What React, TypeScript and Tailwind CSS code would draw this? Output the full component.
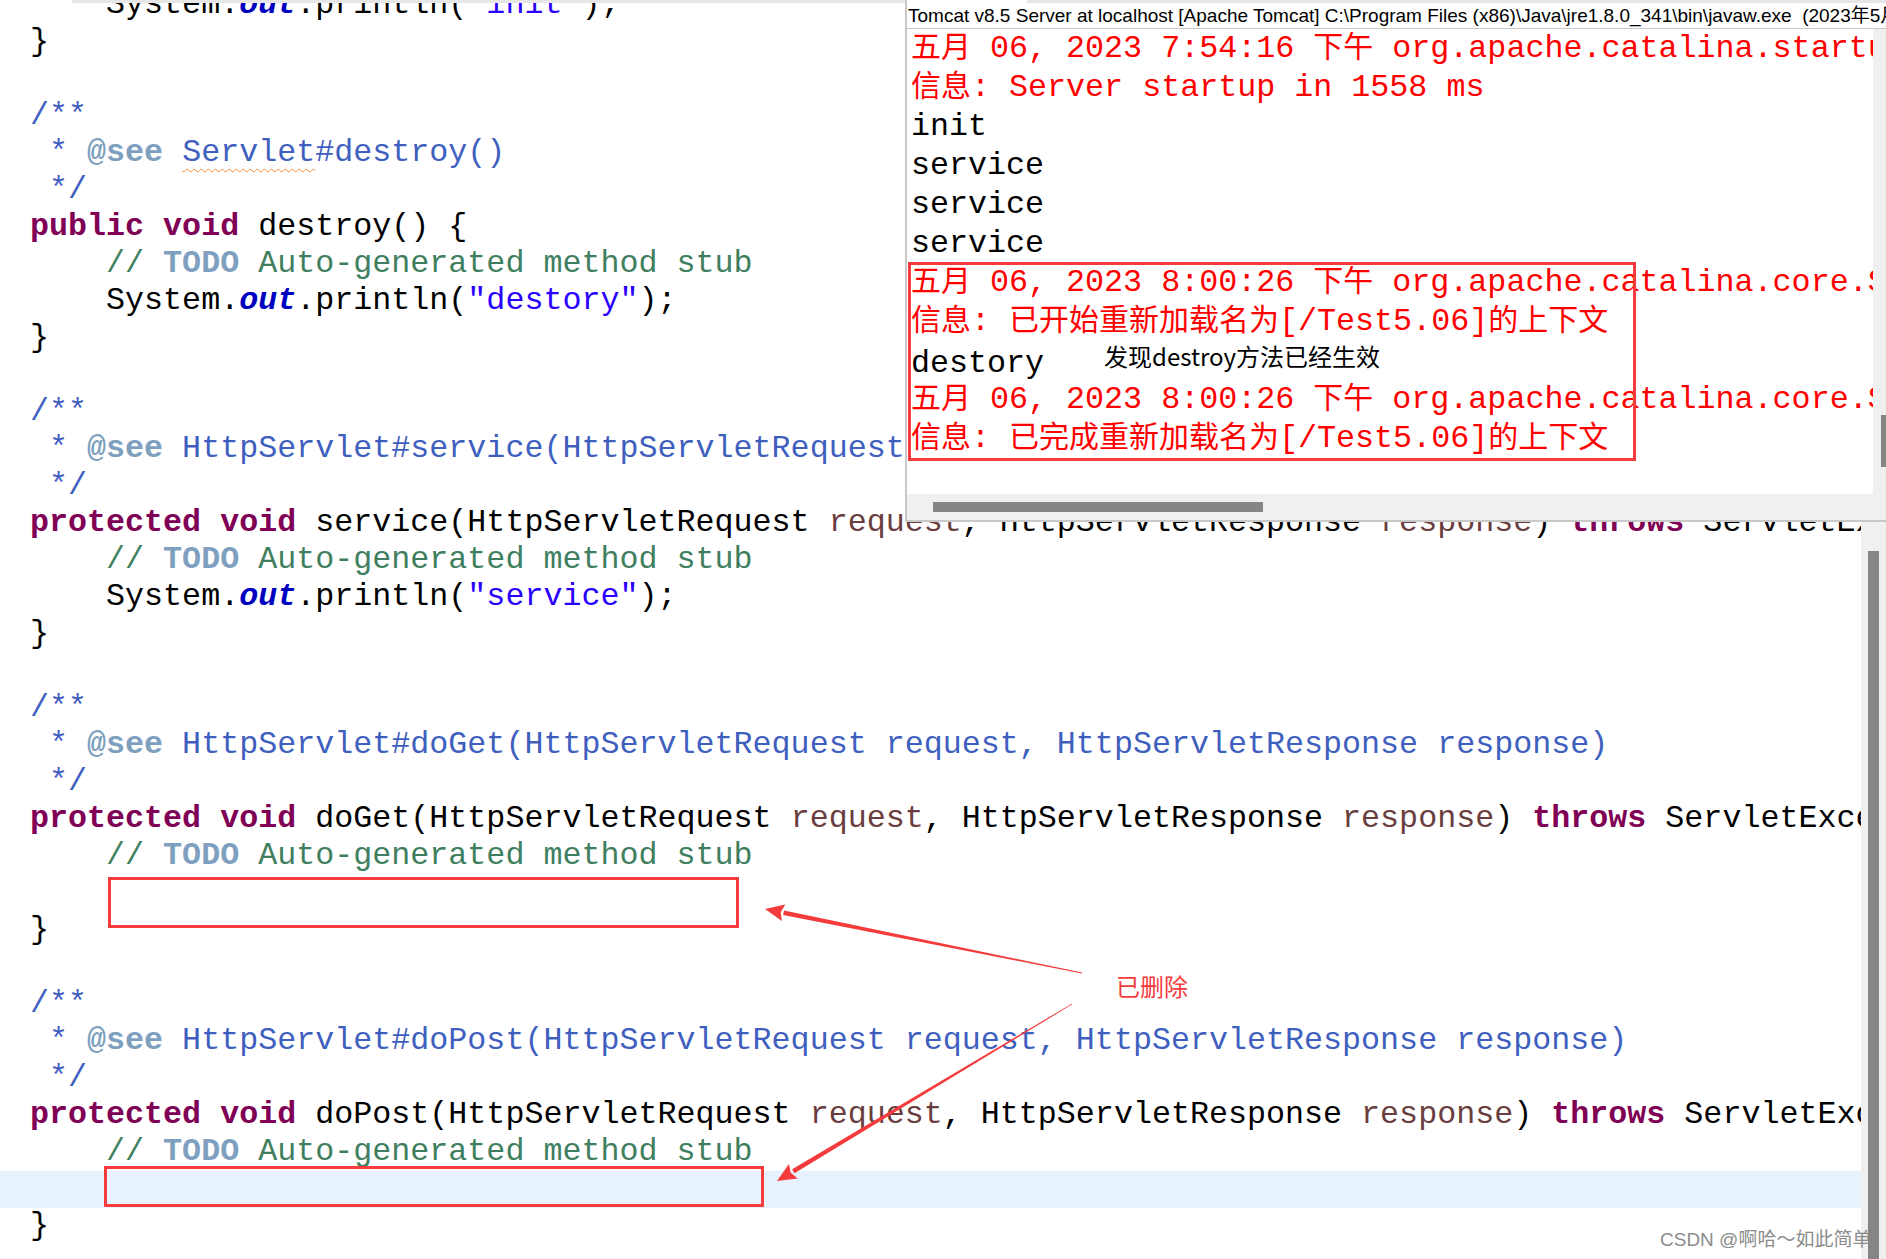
import React from "react"

type Tok = [string, string?]

const K = "font-bold text-[#7f0055]"
const J = "text-[#3f5fbf]"
const TAG = "font-bold text-[#7f9fbf]"
const C = "text-[#3f7f5f]"
const S = "text-[#2a00ff]"
const F = "font-bold italic text-[#0000c0]"
const P = "text-[#6a3e3e]"

const todo: Tok[] = [["    "], ["// ", C], ["TODO", TAG], [" Auto-generated method stub", C]]
const println = (s: string): Tok[] => [["    System."], ["out", F], [".println("], [`"${s}"`, S], [");"]]
const see = (m: string): Tok[] => [
    [" * ", J],
    ["@see", TAG],
    [` HttpServlet#${m}(HttpServletRequest request, HttpServletResponse response)`, J],
]
const method = (m: string): Tok[] => [
    ["protected", K],
    [" "],
    ["void", K],
    [` ${m}(HttpServletRequest `],
    ["request", P],
    [", HttpServletResponse "],
    ["response", P],
    [") "],
    ["throws", K],
    [" ServletException, IOException {"],
]

const codeLines: Tok[][] = [
    println("init"),
    [["}"]],
    [],
    [["/**", J]],
    [[" * ", J], ["@see", TAG], [" ", J], ["Servlet", J + " underline decoration-wavy decoration-[#f08a30] decoration-1 underline-offset-[7px]"], ["#destroy()", J]],
    [[" */", J]],
    [["public", K], [" "], ["void", K], [" destroy() {"]],
    todo,
    println("destory"),
    [["}"]],
    [],
    [["/**", J]],
    see("service"),
    [[" */", J]],
    method("service"),
    todo,
    println("service"),
    [["}"]],
    [],
    [["/**", J]],
    see("doGet"),
    [[" */", J]],
    method("doGet"),
    todo,
    [],
    [["}"]],
    [],
    [["/**", J]],
    see("doPost"),
    [[" */", J]],
    method("doPost"),
    todo,
    [],
    [["}"]],
    [],
]

// splits CJK runs so they get the narrower console width
const Cn = ({ t }: { t: string }) => (
    <>
        {t.split(/([\u3000-\u9fff\uff00-\uffef]+)/).map((part, i) =>
            /[\u3000-\u9fff\uff00-\uffef]/.test(part) ? (
                <span key={i} className="text-[30px]">{part}</span>
            ) : (
                part
            )
        )}
    </>
)

const consoleLines: { t: string; red?: boolean }[] = [
    { t: "五月 06, 2023 7:54:16 下午 org.apache.catalina.startup.Catalina start", red: true },
    { t: "信息: Server startup in 1558 ms", red: true },
    { t: "init" },
    { t: "service" },
    { t: "service" },
    { t: "service" },
    { t: "五月 06, 2023 8:00:26 下午 org.apache.catalina.core.StandardContext reload", red: true },
    { t: "信息: 已开始重新加载名为[/Test5.06]的上下文", red: true },
    { t: "destory" },
    { t: "五月 06, 2023 8:00:26 下午 org.apache.catalina.core.StandardContext reload", red: true },
    { t: "信息: 已完成重新加载名为[/Test5.06]的上下文", red: true },
]

const arrow = (tx: number, ty: number, hx: number, hy: number) => {
    const len = Math.hypot(hx - tx, hy - ty)
    const ux = (hx - tx) / len
    const uy = (hy - ty) / len
    const nx = -uy
    const ny = ux
    const bx = hx - ux * 19
    const by = hy - uy * 19
    const nb = (d: number) => `${bx + nx * d},${by + ny * d}`
    const shaft = `${tx + nx * 0.4},${ty + ny * 0.4} ${nb(2.3)} ${nb(-2.3)} ${tx - nx * 0.4},${ty - ny * 0.4}`
    const head = `${hx},${hy} ${nb(8.5)} ${bx + ux * 3},${by + uy * 3} ${nb(-8.5)}`
    return { shaft, head }
}

const a1 = arrow(1082, 973, 765, 909)
const a2 = arrow(1072, 1004, 777, 1181)

const ConsoleView = () => (
    <div className="absolute left-[905px] top-0 flex h-[522px] w-[981px] flex-col border-b-2 border-l-2 border-[#c9c9c9] bg-white">
        <div className="absolute left-[120px] right-0 top-0 h-[3px] bg-[#e6e6e6]" />
        <div className="h-[29px] shrink-0 overflow-hidden whitespace-pre border-b border-[#c9c9c9] pl-[1px] font-['Liberation_Sans','Noto_Sans_CJK_SC',sans-serif] text-[19px] leading-[31px] text-black">
            Tomcat v8.5 Server at localhost [Apache Tomcat] C:\Program Files (x86)\Java\jre1.8.0_341\bin\javaw.exe  (2023年5月6日 下午7:54:14)
        </div>
        <div className="flex min-h-0 flex-1">
            <div className="relative min-w-0 flex-1 overflow-hidden">
                <div className="pl-[4px] pt-[1px]">
                    {consoleLines.map((l, i) => (
                        <div key={i} className={`h-[39px] whitespace-pre leading-[39px] ${l.red ? "text-[#ff0000]" : "text-black"}`}>
                            <Cn t={l.t} />
                            {l.t === "destory" && (
                                <span className="relative -top-[6px] ml-[60px] font-['Noto_Sans_CJK_SC',sans-serif] text-[24px]">发现destroy方法已经生效</span>
                            )}
                        </div>
                    ))}
                </div>
            </div>
            <div className="w-[13px] shrink-0 bg-[#f0f0f0] pl-[8px] pt-[386px]">
                <div className="h-[52px] w-[5px] bg-[#858585]" />
            </div>
        </div>
        <div className="h-[26px] shrink-0 bg-[#f0f0f0] pl-[26px] pt-[8px]">
            <div className="h-[10px] w-[330px] bg-[#858585]" />
        </div>
        <div className="absolute left-[1px] top-[262px] h-[199px] w-[728px] border-[3px] border-[#f53b3b]" />
    </div>
)

export default function App() {
    return (
        <div className="relative h-[1259px] w-[1886px] overflow-hidden bg-white font-['Liberation_Mono','Noto_Sans_CJK_SC',monospace] text-[31.7px] text-black">
            <div className="flex h-full">
                <div className="relative min-w-0 flex-1 overflow-hidden">
                    <div className="-mt-[13px]">
                        {codeLines.map((toks, i) => (
                            <div key={i} className={`h-[37px] whitespace-pre pl-[30px] leading-[37px] ${i === 32 ? "bg-[#e8f2fe]" : ""}`}>
                                {toks.map(([text, cls], j) => (
                                    <span key={j} className={cls}>{text}</span>
                                ))}
                            </div>
                        ))}
                    </div>

                    <div className="absolute left-[108px] top-[877px] h-[51px] w-[631px] border-[3px] border-[#f53b3b]" />
                    <div className="absolute left-[104px] top-[1166px] h-[41px] w-[660px] border-[3px] border-[#f53b3b]" />
                </div>

                <div className="flex w-[25px] shrink-0 flex-col bg-[#f0f0f0] pl-[7px] pt-[551px]">
                    <div className="w-[11px] flex-1 bg-[#858585]" />
                </div>
            </div>

            <div className="absolute left-[72px] top-0 h-[3px] w-[833px] bg-[#e6e6e6]" />

            <ConsoleView />

            <svg className="pointer-events-none absolute left-0 top-0" width="1886" height="1259" viewBox="0 0 1886 1259">
                <polygon points={a1.shaft} fill="#f53b3b" />
                <polygon points={a1.head} fill="#f53b3b" />
                <polygon points={a2.shaft} fill="#f53b3b" />
                <polygon points={a2.head} fill="#f53b3b" />
            </svg>

            <div className="absolute left-[1116px] top-[972px] font-['Noto_Sans_CJK_SC',sans-serif] text-[24px] leading-[28px] text-[#f53b3b]">
                已删除
            </div>

            <div className="absolute left-[1660px] top-[1226px] whitespace-nowrap font-['Liberation_Sans','Noto_Sans_CJK_SC',sans-serif] text-[19px] leading-[28px] text-[#8c8c8c]">
                CSDN @啊哈～如此简单
            </div>
        </div>
    )
}
